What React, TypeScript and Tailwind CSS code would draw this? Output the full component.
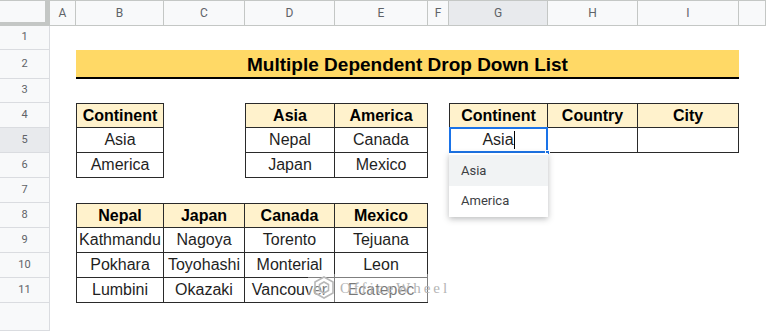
import React from "react";

const colLetters = ["A", "B", "C", "D", "E", "F", "G", "H", "I", ""];
const colStart = [
  "col-start-2",
  "col-start-3",
  "col-start-4",
  "col-start-5",
  "col-start-6",
  "col-start-7",
  "col-start-8",
  "col-start-9",
  "col-start-10",
  "col-start-11",
];
const rowStart = [
  "row-start-2",
  "row-start-3",
  "row-start-4",
  "row-start-5",
  "row-start-6",
  "row-start-7",
  "row-start-8",
  "row-start-9",
  "row-start-10",
  "row-start-11",
  "row-start-12",
  "row-start-13",
];

function Cell({
  children,
  head,
  className = "",
}: {
  children?: React.ReactNode;
  head?: boolean;
  className?: string;
}) {
  return (
    <div
      className={
        "flex items-center justify-center border-r border-b border-[#2a2a2a] whitespace-nowrap overflow-visible text-[16px] leading-none " +
        (head ? "bg-[#fff2cc] font-bold text-black " : "bg-white text-[#1f1f1f] ") +
        className
      }
    >
      {children}
    </div>
  );
}

export default function App() {
  return (
    <div className="w-[766px] h-[331px] overflow-hidden bg-white font-['Liberation_Sans',Arial,sans-serif]">
      <div className="relative grid h-full grid-cols-[50px_26px_88px_81px_90px_93px_21px_99px_90px_101px_1fr] grid-rows-[26px_24px_29px_24px_25px_25px_25px_25px_25px_25px_25px_25px_1fr]">
        {/* corner */}
        <div className="col-start-1 row-start-1 relative bg-[#f8f9fa] border-t border-[#c4c7c5]">
          <div className="absolute right-0 top-0 h-[22px] w-[5px] bg-[#c4c7c5]" />
          <div className="absolute left-0 bottom-0 h-[4px] w-[50px] bg-[#c4c7c5]" />
        </div>
        {/* column headers */}
        {colLetters.map((l, i) => (
          <div
            key={"c" + i}
            className={
              colStart[i] +
              " row-start-1 flex items-center justify-center border-t border-b border-r border-[#c4c7c5] text-[12px] text-[#5f6368] font-['Roboto',Arial,sans-serif] " +
              (l === "G" ? "bg-[#e8eaed]" : "bg-[#f8f9fa]")
            }
          >
            {l}
          </div>
        ))}
        {/* row headers */}
        {rowStart.map((r, i) => (
          <div
            key={"r" + i}
            className={
              r +
              " col-start-1 flex items-center justify-center border-r border-b border-[#dadce0] text-[11px] text-[#5f6368] font-['Roboto',Arial,sans-serif] " +
              (i === 4 ? "bg-[#e8eaed]" : "bg-[#f8f9fa]")
            }
          >
            {i < 11 ? i + 1 : ""}
          </div>
        ))}

        {/* title */}
        <div className="col-start-3 col-span-8 row-start-3 flex items-center justify-center bg-[#ffd966] border-b-2 border-black text-[19px] font-bold text-black leading-none pt-[1px]">
          Multiple Dependent Drop Down List
        </div>

        {/* Table 1 */}
        <div className="col-start-3 row-start-5 row-span-3 grid grid-cols-[87px] grid-rows-[24px_25px_25px] border-l border-t border-[#2a2a2a]">
          <Cell head>Continent</Cell>
          <Cell>Asia</Cell>
          <Cell>America</Cell>
        </div>

        {/* Table 2 */}
        <div className="col-start-5 col-span-2 row-start-5 row-span-3 grid grid-cols-[89px_93px] grid-rows-[24px_25px_25px] border-l border-t border-[#2a2a2a]">
          <Cell head>Asia</Cell>
          <Cell head>America</Cell>
          <Cell>Nepal</Cell>
          <Cell>Canada</Cell>
          <Cell>Japan</Cell>
          <Cell>Mexico</Cell>
        </div>

        {/* Table 3 */}
        <div className="col-start-8 col-span-3 row-start-5 row-span-2 grid grid-cols-[98px_90px_101px] grid-rows-[24px_25px] border-l border-t border-[#2a2a2a]">
          <Cell head>Continent</Cell>
          <Cell head>Country</Cell>
          <Cell head>City</Cell>
          <Cell className="relative">
            <span className="flex items-center">
              Asia
              <span className="inline-block w-px h-[18px] bg-black" />
            </span>
            <div className="absolute -left-px -top-px w-[99px] h-[26px] border-2 border-[#1a73e8]" />
            <div className="absolute right-[-3px] bottom-[-3px] w-[5px] h-[5px] bg-[#1a73e8] border border-white" />
            <div className="absolute left-[-1px] top-[25px] z-10 w-[99px] bg-white py-[2px] shadow-[0_2px_6px_rgba(60,64,67,0.35)] font-['Roboto',Arial,sans-serif] text-[13px] text-[#3c4043] font-normal">
              <div className="h-[31px] flex items-center pl-[12px] bg-[#f1f3f4]">Asia</div>
              <div className="h-[29px] flex items-center pl-[12px]">America</div>
            </div>
          </Cell>
          <Cell />
          <Cell />
        </div>

        {/* Table 4 */}
        <div className="col-start-3 col-span-4 row-start-9 row-span-4 grid grid-cols-[87px_81px_90px_93px] grid-rows-[24px_25px_25px_25px] border-l border-t border-[#2a2a2a]">
          <Cell head>Nepal</Cell>
          <Cell head>Japan</Cell>
          <Cell head>Canada</Cell>
          <Cell head>Mexico</Cell>
          <Cell>Kathmandu</Cell>
          <Cell>Nagoya</Cell>
          <Cell>Torento</Cell>
          <Cell>Tejuana</Cell>
          <Cell>Pokhara</Cell>
          <Cell>Toyohashi</Cell>
          <Cell>Monterial</Cell>
          <Cell>Leon</Cell>
          <Cell>Lumbini</Cell>
          <Cell>Okazaki</Cell>
          <Cell>Vancouver</Cell>
          <Cell>Ecatepec</Cell>
        </div>

        {/* watermark */}
        <div className="absolute left-[308px] top-[274px] z-20 flex items-center gap-[4px] bg-white/40 px-[4px] py-[1px] pointer-events-none">
          <svg width="24" height="26" viewBox="0 0 24 26" fill="none" stroke="#b8b8b8" strokeWidth="1.6">
            <path d="M12 2 L21 7 L21 18 L12 23 L3 18 L3 7 Z" />
            <path d="M12 7 L16.5 9.5 L16.5 15.5 L12 18 L7.5 15.5 L7.5 9.5 Z" />
          </svg>
          <span className="text-[15px] tracking-[3px] text-[#b5b5b5] font-['Liberation_Serif',serif]">OfficeWheel</span>
        </div>
      </div>
    </div>
  );
}
